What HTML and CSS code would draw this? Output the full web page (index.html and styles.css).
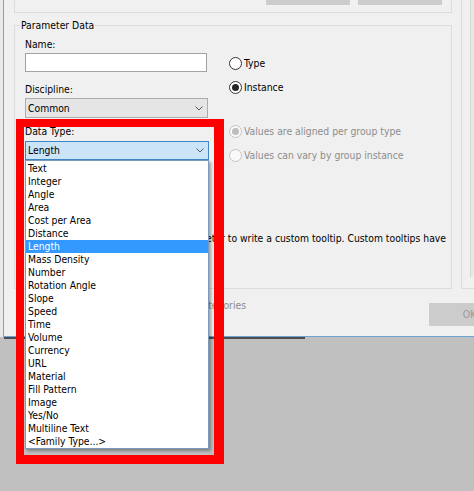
FILE: index.html
```html
<!DOCTYPE html>
<html lang="en">
<head>
<meta charset="utf-8">
<title>Parameter Data</title>
<link rel="stylesheet" href="styles.css">
</head>
<body>
<div class="screen">
  <div class="backwin">
    <div class="dialog">
      <div class="body">
        <div class="leftpane">
          <div class="prevgroup">
            <div class="btn"></div>
            <div class="btn"></div>
          </div>
          <fieldset class="group">
            <legend>Parameter Data</legend>
            <div class="cols">
              <div class="colL">
                <div class="lbl l-name">Name:</div>
                <div class="textbox"></div>
                <div class="lbl l-disc">Discipline:</div>
                <div class="combo">
                  <span>Common</span>
                  <svg class="chev" width="8" height="5" viewBox="0 0 8 5"><polyline points="0.5,0.5 4,4 7.5,0.5"/></svg>
                </div>
                <div class="lbl l-dt">Data Type:</div>
                <div class="combo-wrap">
                  <div class="combo open">
                    <span>Length</span>
                    <svg class="chev" width="8" height="5" viewBox="0 0 8 5"><polyline points="0.5,0.5 4,4 7.5,0.5"/></svg>
                  </div>
                  <ul class="droplist">
                    <li>Text</li>
                    <li>Integer</li>
                    <li>Angle</li>
                    <li>Area</li>
                    <li>Cost per Area</li>
                    <li>Distance</li>
                    <li class="sel">Length</li>
                    <li>Mass Density</li>
                    <li>Number</li>
                    <li>Rotation Angle</li>
                    <li>Slope</li>
                    <li>Speed</li>
                    <li>Time</li>
                    <li>Volume</li>
                    <li>Currency</li>
                    <li>URL</li>
                    <li>Material</li>
                    <li>Fill Pattern</li>
                    <li>Image</li>
                    <li>Yes/No</li>
                    <li>Multiline Text</li>
                    <li>&lt;Family Type...&gt;</li>
                  </ul>
                </div>
              </div>
              <div class="colR">
                <div class="radio r-type"><span class="circle"></span>Type</div>
                <div class="radio r-inst"><span class="circle"><span class="dot"></span></span>Instance</div>
                <div class="radio r-align disabled"><span class="circle"><span class="dot"></span></span>Values are aligned per group type</div>
                <div class="radio r-vary disabled"><span class="circle"></span>Values can vary by group instance</div>
              </div>
            </div>
            <div class="tipdesc"><span>Edit this parameter to write a custom tooltip. Custom tooltips have</span></div>
          </fieldset>
        </div>
        <div class="rightpane"><div class="inner"></div></div>
      </div>
      <div class="footer">
        <div class="hint">Hide un-checked categories</div>
        <div class="okbtn">OK</div>
      </div>
    </div>
  </div>
  <div class="underline"></div>
  <div class="redframe"></div>
</div>
</body>
</html>
```
FILE: styles.css
```css
html, body {
  margin: 0;
  padding: 0;
  background: #c0c0c0;
  overflow: hidden;
}

.screen {
  position: relative;
  width: 474px;
  height: 491px;
  overflow: hidden;
  font-family: "DejaVu Sans Condensed", "DejaVu Sans", sans-serif;
  font-stretch: condensed;
  font-size: 10.3px;
  line-height: 13px;
  color: #000000;
}

.backwin {
  width: 600px;
  padding-left: 3px;
  background: #e9e9e9;
}

.dialog {
  width: 580px;
  background: #f0f0f0;
  border-left: 1px solid #6ea3d6;
  border-bottom: 1px solid #6ea3d6;
}

.body {
  display: flex;
  height: 289px;
}

.leftpane {
  width: 448px;
  padding-left: 10px;
  box-sizing: border-box;
}

.prevgroup {
  width: 438px;
  height: 13px;
  box-sizing: border-box;
  border: 1px solid #dcdcdc;
  border-top: none;
  display: flex;
  justify-content: flex-end;
  gap: 8px;
  padding-right: 9px;
}

.btn {
  width: 84px;
  height: 5px;
  background: #cccccc;
}

.group {
  margin: 6px 0 0 0;
  padding: 0;
  width: 438px;
  height: 270px;
  box-sizing: border-box;
  border: 1px solid #dcdcdc;
  min-width: 0;
}

.group legend {
  margin-left: 5px;
  padding: 0 1px;
  line-height: 13px;
}

.cols {
  display: flex;
  gap: 20px;
  padding: 0 10px;
}

.colL {
  width: 184px;
  display: flex;
  flex-direction: column;
}

.lbl {
  height: 13px;
}

.l-name { margin-top: 6px; }
.l-disc { margin-top: 11px; }
.l-dt { margin-top: 7px; }

.textbox {
  margin-top: 2px;
  width: 182px;
  height: 19px;
  box-sizing: border-box;
  background: #ffffff;
  border: 1px solid #a3a3a3;
}

.combo {
  margin-top: 2px;
  width: 183px;
  height: 20px;
  box-sizing: border-box;
  background: #e5e5e5;
  border: 1px solid #adadad;
  display: flex;
  align-items: center;
  justify-content: space-between;
  padding: 0 4px 0 2px;
}

.chev polyline {
  fill: none;
  stroke: #5a5a5a;
  stroke-width: 1;
}

.combo-wrap {
  position: relative;
  margin-top: 3px;
}

.combo.open {
  margin-top: 0;
  width: 184px;
  height: 19px;
  background: #cce4f7;
  border-color: #3f86c8;
}

.droplist {
  position: absolute;
  left: 0;
  top: 19px;
  width: 184px;
  margin: 0;
  padding: 1px 0 0 0;
  height: 289px;
  box-sizing: border-box;
  list-style: none;
  background: #ffffff;
  border: 1px solid #7c9bbb;
  box-shadow: 2px 2px 3px rgba(0, 0, 0, 0.35);
  z-index: 2;
}

.droplist li {
  height: 13px;
  line-height: 13px;
  padding-left: 2px;
  white-space: nowrap;
}

.droplist li.sel {
  background: #3399ff;
  color: #ffffff;
}

.colR {
  display: flex;
  flex-direction: column;
}

.radio {
  display: flex;
  align-items: center;
  gap: 2px;
  height: 13px;
  white-space: nowrap;
}

.r-type { margin-top: 25px; }
.r-inst { margin-top: 11px; }
.r-align { margin-top: 31px; }
.r-vary { margin-top: 11px; }

.circle {
  width: 13px;
  height: 13px;
  box-sizing: border-box;
  border-radius: 50%;
  border: 1px solid #333333;
  background: #ffffff;
  display: flex;
  align-items: center;
  justify-content: center;
  flex: none;
}

.dot {
  width: 7px;
  height: 7px;
  border-radius: 50%;
  background: #262626;
}

.radio.disabled {
  color: #8d8d8d;
}

.radio.disabled .circle {
  border-color: #c4c4c4;
  background: #f9f9f9;
}

.radio.disabled .dot {
  background: #bdbdbd;
}

.tipdesc {
  margin-top: 70px;
  padding: 0 5px 0 10px;
  text-align: right;
  white-space: nowrap;
  overflow: hidden;
}

.rightpane {
  margin-left: 9px;
  width: 60px;
  height: 289px;
  box-sizing: border-box;
  border-left: 1px solid #dcdcdc;
  border-bottom: 1px solid #dcdcdc;
}

.rightpane .inner {
  margin-left: 8px;
  height: 277px;
  background: #e7e7e7;
  border-left: 1px solid #d6d6d6;
}

.footer {
  display: flex;
  align-items: flex-start;
  height: 47px;
}

.hint {
  width: 242px;
  margin-top: 10px;
  text-align: right;
  color: #8a8a8a;
  white-space: nowrap;
}

.okbtn {
  margin-left: 183px;
  margin-top: 14px;
  width: 81px;
  height: 23px;
  flex: none;
  background: #cccccc;
  color: #9a9a9a;
  display: flex;
  align-items: center;
  justify-content: center;
}

.underline {
  margin-left: 4px;
  width: 301px;
  height: 2px;
  background: #4d4d4d;
}

.redframe {
  position: absolute;
  left: 16px;
  top: 119px;
  width: 208px;
  height: 345px;
  box-sizing: border-box;
  border-style: solid;
  border-color: #ff0000;
  border-width: 8px 10px 9px 8px;
  z-index: 3;
}
```
